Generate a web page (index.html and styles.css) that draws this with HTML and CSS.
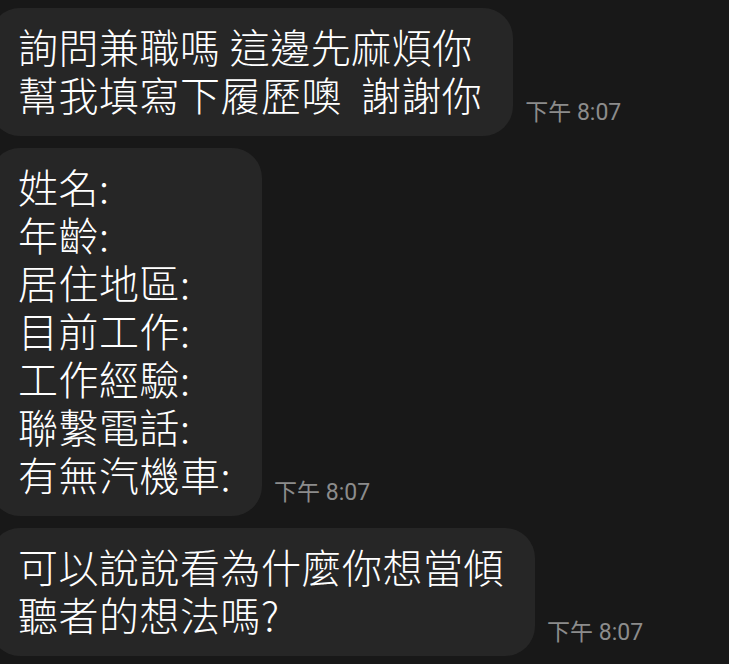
FILE: index.html
```html
<!DOCTYPE html>
<html lang="zh-Hant">
<head>
<meta charset="utf-8">
<link rel="stylesheet" href="styles.css">
</head>
<body>
<div class="chat">
  <div class="row row-1">
    <div class="bubble">詢問兼職嗎 這邊先麻煩你<br>幫我填寫下履歷噢&nbsp; 謝謝你</div>
    <div class="time">下午 8:07</div>
  </div>
  <div class="row row-2">
    <div class="bubble">姓名:<br>年齡:<br>居住地區:<br>目前工作:<br>工作經驗:<br>聯繫電話:<br>有無汽機車:</div>
    <div class="time">下午 8:07</div>
  </div>
  <div class="row row-3">
    <div class="bubble">可以說說看為什麼你想當傾<br>聽者的想法嗎?</div>
    <div class="time">下午 8:07</div>
  </div>
</div>
</body>
</html>
```
FILE: styles.css
```css
html, body {
  margin: 0;
  padding: 0;
  background: #181818;
  height: 100%;
  overflow: hidden;
}
.chat {
  display: flex;
  flex-direction: column;
  gap: 12px;
  padding-top: 8px;
  font-family: "Noto Sans CJK TC", "Noto Sans", sans-serif;
}
.row {
  display: flex;
  align-items: flex-end;
  gap: 12px;
}
.bubble {
  margin-left: -10px;
  background: #262626;
  color: #ffffff;
  font-size: 40px;
  font-weight: 300;
  letter-spacing: 0.5px;
  line-height: 48px;
  padding: 14px 31px 18px 28px;
  border-radius: 30px;
  white-space: nowrap;
}
.time {
  color: #8c8c8c;
  font-family: Roboto, "Noto Sans CJK TC", sans-serif;
  font-size: 23px;
  line-height: 26px;
  padding-bottom: 10px;
  white-space: nowrap;
}
```
